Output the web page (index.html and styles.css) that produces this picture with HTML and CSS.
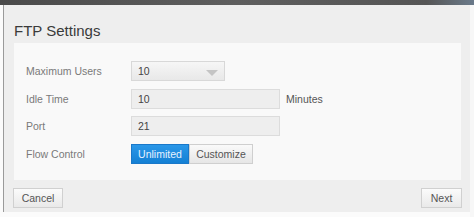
FILE: index.html
```html
<!DOCTYPE html>
<html>

<head>
    <title>FTP Settings</title>
    <meta charset="utf-8">
    <link rel="stylesheet" href="styles.css">
</head>

<body>
<div class="backdrop">
    <div class="topbar"></div>
    <div class="stage">
        <div class="modal">
            <div class="modal-title">FTP Settings</div>
            <div class="panel">
                <div class="row">
                    <div class="label">Maximum Users</div>
                    <div class="select">10<span class="caret"></span></div>
                </div>
                <div class="row">
                    <div class="label">Idle Time</div>
                    <div class="input">10</div>
                    <div class="unit">Minutes</div>
                </div>
                <div class="row">
                    <div class="label">Port</div>
                    <div class="input">21</div>
                </div>
                <div class="row">
                    <div class="label">Flow Control</div>
                    <div class="toggle">
                        <button class="seg seg-on">Unlimited</button>
                        <button class="seg">Customize</button>
                    </div>
                </div>
            </div>
            <div class="modal-footer">
                <button class="btn btn-cancel">Cancel</button>
                <button class="btn btn-next">Next</button>
            </div>
        </div>
        <div class="edge"></div>
    </div>
</div>
</body>

</html>
```

FILE: styles.css
```css
body {
    margin: 0;
    background-color: #fbfbfb;
    font-family: "Liberation Sans", Arial, sans-serif;
}

.backdrop {
    width: 474px;
    height: 217px;
    overflow: hidden;
}

.topbar {
    height: 5px;
    background: linear-gradient(90deg, #4a4a4a, #5e5e5e 50%, #555 90%, #6a7a8a);
}

.stage {
    display: flex;
    height: 212px;
}

.modal {
    width: 466px;
    height: 207px;
    margin-left: 3px;
    border-left: 1px solid #9a9a9a;
    background-color: #eeeeee;
    display: flex;
    flex-direction: column;
}

.edge {
    flex: 1;
    background-color: #f7f7f7;
}

.modal-title {
    padding: 17px 0 0 10px;
    height: 21px;
    font-size: 15px;
    color: #3a3a3a;
}

.panel {
    margin-left: 10px;
    width: 447px;
    height: 137px;
    background-color: #f9f9f9;
    padding-top: 18px;
    box-sizing: border-box;
}

.row {
    display: flex;
    align-items: center;
    height: 20px;
    margin-bottom: 7.5px;
}

.label {
    width: 117px;
    padding-left: 12px;
    box-sizing: border-box;
    font-size: 10.5px;
    color: #7a7a7a;
}

.select,
.input {
    height: 20px;
    box-sizing: border-box;
    border: 1px solid #dcdcdc;
    background-color: #eeeeee;
    font-size: 10.5px;
    color: #444;
    padding-left: 6px;
    line-height: 18px;
}

.select {
    width: 94px;
    position: relative;
    background: linear-gradient(#f6f6f6, #e8e8e8);
    border-color: #d8d8d8;
}

.caret {
    position: absolute;
    right: 6px;
    top: 8px;
    border-left: 6px solid transparent;
    border-right: 6px solid transparent;
    border-top: 6px solid #c4c4c4;
}

.input {
    width: 149px;
}

.unit {
    margin-left: 6px;
    font-size: 10.5px;
    color: #555;
}

.toggle {
    display: flex;
}

.seg {
    height: 20px;
    border: 1px solid #cfcfcf;
    background: linear-gradient(#fafafa, #e6e6e6);
    font-family: inherit;
    font-size: 10.5px;
    color: #555;
    padding: 0;
    width: 64px;
}

.seg-on {
    width: 58px;
    border-color: #1a78c9;
    background: linear-gradient(#2a97e8, #1480d4);
    color: #e6f2ff;
}

.modal-footer {
    display: flex;
    justify-content: space-between;
    padding: 8px 8px 0 9px;
}

.btn {
    height: 20px;
    border: 1px solid #d0d0d0;
    background: linear-gradient(#fbfbfb, #e9e9e9);
    font-family: inherit;
    font-size: 10.5px;
    color: #555;
    padding: 0;
}

.btn-cancel {
    width: 50px;
}

.btn-next {
    width: 41px;
}
```
